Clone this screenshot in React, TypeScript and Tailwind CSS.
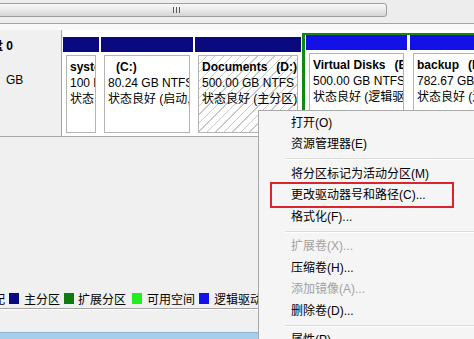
import React from "react";

type PartProps = {
  col: string;
  header: string;
  body: string;
  title: React.ReactNode;
  size: string;
  status: string;
};

function Part({ col, header, body, title, size, status }: PartProps) {
  return (
    <div className={`shrink-0 flex flex-col bg-white ${col}`}>
      <div className={`h-[15px] ${header}`} />
      <div className="p-[3px]">
        <div
          className={`border border-[#b4b4b4] pl-[3px] pt-[3px] leading-[16px] whitespace-nowrap overflow-hidden ${body}`}
        >
          <div className="font-bold">{title}</div>
          <div>{size}</div>
          <div>{status}</div>
        </div>
      </div>
    </div>
  );
}

function Item({ text, disabled }: { text: string; disabled?: boolean }) {
  return (
    <div
      className={`h-[21.5px] flex items-center pl-[32px] whitespace-nowrap ${
        disabled ? "text-[#a2a2a2]" : "text-black"
      }`}
    >
      {text}
    </div>
  );
}

function Sep() {
  return (
    <div className="h-[8px] flex items-center pl-[26px]">
      <div className="w-full border-t border-[#dcdcdc] border-b border-b-white" />
    </div>
  );
}

function Legend({ color, label, sq, tx }: { color: string; label: string; sq: string; tx: string }) {
  return (
    <>
      <div className={`w-[10px] h-[11px] shrink-0 ${color} ${sq}`} />
      <span className={`shrink-0 ${tx}`}>{label}</span>
    </>
  );
}

export default function App() {
  return (
    <div className="relative w-[474px] h-[339px] overflow-hidden bg-[#f0f0f0] text-[12px] text-black font-['Liberation_Sans','Noto_Sans_CJK_SC',sans-serif]">
      {/* horizontal scrollbar */}
      <div className="h-[24px] bg-[#ededed] border-b border-[#a3a3a3] pt-[3px] overflow-hidden">
        <div className="-ml-[35px] w-[422px] h-[14px] rounded-[3px] border border-[#9e9e9e] bg-gradient-to-b from-[#f8f8f8] via-[#e9e9e9] to-[#d4d4d4] flex items-center justify-center">
          <div className="flex gap-[2px]">
            <div className="w-[1px] h-[6px] bg-[#5a5a5a]" />
            <div className="w-[1px] h-[6px] bg-[#5a5a5a]" />
            <div className="w-[1px] h-[6px] bg-[#5a5a5a]" />
          </div>
        </div>
      </div>
      <div className="h-[6px] bg-[#f8f8f8]" />

      {/* disk row */}
      <div className="flex h-[107px] border-b border-[#a6a6a6]">
        <div className="w-[62px] shrink-0 border-r border-[#a6a6a6] bg-[#f0f0f0] overflow-hidden pt-[8px] leading-[17px] whitespace-nowrap font-['Liberation_Sans','Noto_Sans_CJK_SC',sans-serif]">
          <div className="-ml-[21px] font-bold">磁盘 0</div>
          <div className="h-[17px]" />
          <div className="pl-[6px]">GB</div>
        </div>
        <div className="flex-1 bg-white flex items-start overflow-hidden pl-[1px]">
          <div className="mt-[7px] flex gap-[2px]">
            <Part
              col="w-[36px]"
              header="bg-[#0a0a80]"
              body="h-[78px] bg-white"
              title="system"
              size="100 MB NTFS"
              status="状态良好 (系统, 活动, 主分区)"
            />
            <Part
              col="w-[92px]"
              header="bg-[#0a0a80]"
              body="h-[78px] bg-white"
              title={<span className="pl-[8px]">(C:)</span>}
              size="80.24 GB NTFS"
              status="状态良好 (启动, 页面文件, 主分区)"
            />
            <Part
              col="w-[106px]"
              header="bg-[#0a0a80]"
              body="h-[78px] bg-[repeating-linear-gradient(135deg,#ffffff_0px,#ffffff_5px,#c9c9c9_5px,#c9c9c9_6px)]"
              title={
                <span>
                  Documents<span className="pl-[9px]">(D:)</span>
                </span>
              }
              size="500.00 GB NTFS"
              status="状态良好 (主分区)"
            />
          </div>
          <div className="ml-[1px] mt-[3px] flex gap-[3px] pl-[1px] border-l-[3px] border-t-2 border-[#118a11] shrink-0">
            <Part
              col="w-[101px]"
              header="bg-[#1212e8]"
              body="h-[80px] bg-white"
              title={
                <span>
                  Virtual Disks<span className="pl-[9px]">(E:)</span>
                </span>
              }
              size="500.00 GB NTFS"
              status="状态良好 (逻辑驱动器)"
            />
            <Part
              col="w-[110px]"
              header="bg-[#1212e8]"
              body="h-[80px] bg-white"
              title={
                <span>
                  backup<span className="pl-[9px]">(F:)</span>
                </span>
              }
              size="782.67 GB NTFS"
              status="状态良好 (逻辑驱动器)"
            />
          </div>
        </div>
      </div>

      {/* empty area */}
      <div className="h-[152px]" />

      {/* legend */}
      <div className="h-[19px] flex items-center whitespace-nowrap overflow-hidden font-['Noto_Sans_CJK_SC',sans-serif] leading-[12px]">
        <span className="-ml-[31px] shrink-0">未分配</span>
        <Legend color="bg-[#0b0b80]" label="主分区" sq="ml-[4px]" tx="ml-[5px]" />
        <Legend color="bg-[#0e7a10]" label="扩展分区" sq="ml-[4px]" tx="ml-[4px]" />
        <Legend color="bg-[#1ef01e]" label="可用空间" sq="ml-[6px]" tx="ml-[5px]" />
        <Legend color="bg-[#1212e8]" label="逻辑驱动器" sq="ml-[4px]" tx="ml-[5px]" />
      </div>
      <div className="border-t border-[#a6a6a6] border-b border-b-white" />
      <div className="h-[22px] bg-[#f0f0f0]" />
      <div className="h-[7px] bg-[#a7cfec] border-t border-[#8db6d6]" />

      {/* context menu */}
      <div className="absolute left-[258px] top-[110px] w-[230px] h-[245px] bg-[#f5f5f5] border border-[#a9a9a9] pt-[1px] font-['Liberation_Sans','Noto_Sans_CJK_SC',sans-serif] text-[12px]">
        <Item text="打开(O)" />
        <Item text="资源管理器(E)" />
        <Sep />
        <Item text="将分区标记为活动分区(M)" />
        <Item text="更改驱动器号和路径(C)..." />
        <Item text="格式化(F)..." />
        <Sep />
        <Item text="扩展卷(X)..." disabled />
        <Item text="压缩卷(H)..." />
        <Item text="添加镜像(A)..." disabled />
        <Item text="删除卷(D)..." />
        <Sep />
        <Item text="属性(P)" />
      </div>

      {/* red highlight annotation */}
      <div className="absolute left-[270px] top-[182px] w-[184px] h-[26px] border-2 border-[#d8262c]" />
    </div>
  );
}
